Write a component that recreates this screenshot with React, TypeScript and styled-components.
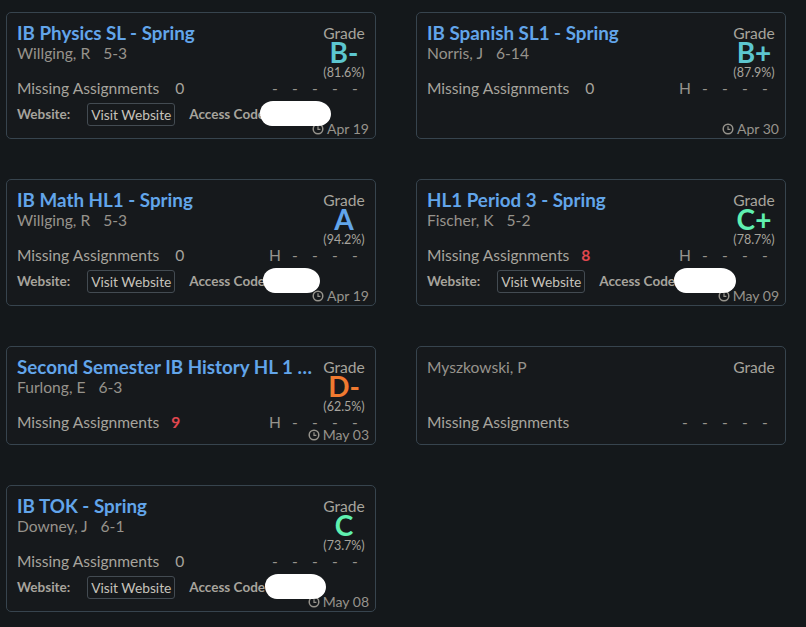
import React from "react";
import styled, { createGlobalStyle } from "styled-components";

const Global = createGlobalStyle`
  html, body { margin: 0; padding: 0; background: #14181b; }
  body { font-family: "Lato", "Open Sans", sans-serif; }
`;

const Page = styled.div`
  width: 806px;
  height: 627px;
  box-sizing: border-box;
  padding: 12px 0 0 6px;
  overflow: hidden;
  display: grid;
  grid-template-columns: 370px 370px;
  grid-auto-rows: min-content;
  column-gap: 40px;
  row-gap: 40px;
`;

const Card = styled.div`
  position: relative;
  box-sizing: border-box;
  background: #16191c;
  border: 1px solid #37444e;
  border-radius: 5px;
  padding: 10px 10px 0 10px;
  color: #a7a49d;
`;

const Head = styled.div`
  display: flex;
  justify-content: space-between;
  align-items: flex-start;
  height: 54px;
`;

const Info = styled.div`
  min-width: 0;
  flex: 1;
`;

const Title = styled.div`
  font-size: 18.8px;
  font-weight: 700;
  line-height: 20px;
  padding: 2px 0;
  margin: -2px 0;
  color: #62a5ea;
  white-space: nowrap;
  overflow: hidden;
  text-overflow: ellipsis;
  max-width: 296px;
`;

const Teacher = styled.div`
  font-size: 15.6px;
  line-height: 20px;
  color: #96938c;
  display: flex;
  gap: 13px;
`;

const GradeBox = styled.div`
  width: 44px;
  margin-right: -1px;
  flex: none;
  display: flex;
  flex-direction: column;
  align-items: center;
`;

const GradeLabel = styled.div`
  font-size: 15.6px;
  line-height: 20px;
  color: #a7a49d;
  white-space: nowrap;
`;

const GradeLetter = styled.div<{ $color: string }>`
  font-size: 28px;
  font-weight: 700;
  line-height: 20px;
  margin-top: -1px;
  color: ${(p) => p.$color};
`;

const Percent = styled.div`
  font-size: 12.5px;
  line-height: 14px;
  margin-top: 4px;
  color: #a7a49d;
  white-space: nowrap;
`;

const MissingRow = styled.div`
  display: flex;
  align-items: center;
  justify-content: space-between;
  height: 20px;
  margin-top: 1px;
  font-size: 15.6px;
`;

const MissingLabel = styled.div`
  display: flex;
  align-items: center;
  color: #a7a49d;
`;

const MissingCount = styled.span<{ $alert: boolean }>`
  display: inline-block;
  margin-left: ${(p) => (p.$alert ? "12px" : "16px")};
  color: ${(p) => (p.$alert ? "#e0474f" : "#a7a49d")};
  font-weight: ${(p) => (p.$alert ? 700 : 400)};
`;

const Marks = styled.div`
  display: flex;
  justify-content: flex-end;
  font-size: 15.6px;
  color: #96938c;
`;

const Mark = styled.span`
  width: 20px;
  text-align: center;
`;

const WebRow = styled.div`
  display: flex;
  align-items: center;
  height: 24px;
  margin-top: 4px;
  margin-bottom: 12px;
  font-size: 13.5px;
`;

const WebLabel = styled.span`
  font-weight: 700;
  color: #a7a49d;
  margin-right: 17px;
`;

const VisitButton = styled.a`
  box-sizing: border-box;
  width: 88px;
  height: 23px;
  display: flex;
  align-items: center;
  justify-content: center;
  border: 1px solid #434b52;
  border-radius: 3px;
  font-size: 13.8px;
  white-space: nowrap;
  color: #c6c3bb;
  margin-right: 14px;
`;

const CodeLabel = styled.span`
  font-weight: 700;
  color: #a7a49d;
`;

const Spacer = styled.div`
  height: 12px;
`;

const DateStamp = styled.div`
  position: absolute;
  right: 6px;
  bottom: 1px;
  display: flex;
  align-items: center;
  gap: 3px;
  font-size: 14px;
  line-height: 16px;
  color: #96938c;
`;

const Redaction = styled.div<{ $left: number; $width: number }>`
  position: absolute;
  left: ${(p) => p.$left}px;
  top: 88px;
  width: ${(p) => p.$width}px;
  height: 25px;
  background: #fff;
  border-radius: 13px 15px 13px 12px / 12px 13px 12px 13px;
`;

const Clock = () => (
  <svg width="12" height="12" viewBox="0 0 12 12" fill="none" stroke="#96938c" strokeWidth="1.5">
    <circle cx="6" cy="6" r="4.8" />
    <path d="M6 3.2V6.3H8.4" strokeWidth="1.2" />
  </svg>
);

type C = {
  title?: string;
  teacher: string;
  room?: string;
  grade?: string;
  color?: string;
  pct?: string;
  missing?: number;
  marks: string;
  web?: boolean;
  date?: string;
  blob?: { left: number; width: number };
};

const cards: C[] = [
  { title: "IB Physics SL - Spring", teacher: "Willging, R", room: "5-3", grade: "B-", color: "#5cc6d0", pct: "(81.6%)", missing: 0, marks: "-----", web: true, date: "Apr 19", blob: { left: 253, width: 71 } },
  { title: "IB Spanish SL1 - Spring", teacher: "Norris, J", room: "6-14", grade: "B+", color: "#5cc6d0", pct: "(87.9%)", missing: 0, marks: "H----", date: "Apr 30" },
  { title: "IB Math HL1 - Spring", teacher: "Willging, R", room: "5-3", grade: "A", color: "#62a5ea", pct: "(94.2%)", missing: 0, marks: "H----", web: true, date: "Apr 19", blob: { left: 256, width: 57 } },
  { title: "HL1 Period 3 - Spring", teacher: "Fischer, K", room: "5-2", grade: "C+", color: "#5ff0b0", pct: "(78.7%)", missing: 8, marks: "H----", web: true, date: "May 09", blob: { left: 257, width: 62 } },
  { title: "Second Semester IB History HL 1 - Spring", teacher: "Furlong, E", room: "6-3", grade: "D-", color: "#f07a30", pct: "(62.5%)", missing: 9, marks: "H----", date: "May 03" },
  { teacher: "Myszkowski, P", marks: "-----" },
  { title: "IB TOK - Spring", teacher: "Downey, J", room: "6-1", grade: "C", color: "#5ff0b0", pct: "(73.7%)", missing: 0, marks: "-----", web: true, date: "May 08", blob: { left: 258, width: 61 } },
];

export default function App() {
  return (
    <Page>
      <Global />
      {cards.map((c, i) => (
        <Card key={i}>
          <Head>
            <Info>
              {c.title && <Title>{c.title}</Title>}
              <Teacher>
                <span>{c.teacher}</span>
                {c.room && <span>{c.room}</span>}
              </Teacher>
            </Info>
            <GradeBox>
              <GradeLabel>Grade</GradeLabel>
              {c.grade && <GradeLetter $color={c.color!}>{c.grade}</GradeLetter>}
              {c.pct && <Percent>{c.pct}</Percent>}
            </GradeBox>
          </Head>
          <MissingRow>
            <MissingLabel>
              Missing Assignments
              {c.missing !== undefined && (
                <MissingCount $alert={c.missing > 0}>{c.missing}</MissingCount>
              )}
            </MissingLabel>
            <Marks>
              {c.marks.split("").map((m, j) => (
                <Mark key={j}>{m}</Mark>
              ))}
            </Marks>
          </MissingRow>
          {c.web ? (
            <WebRow>
              <WebLabel>Website:</WebLabel>
              <VisitButton>Visit Website</VisitButton>
              <CodeLabel>Access Code</CodeLabel>
            </WebRow>
          ) : (
            <Spacer />
          )}
          {c.date && (
            <DateStamp>
              <Clock />
              {c.date}
            </DateStamp>
          )}
          {c.blob && <Redaction $left={c.blob.left} $width={c.blob.width} />}
        </Card>
      ))}
    </Page>
  );
}
